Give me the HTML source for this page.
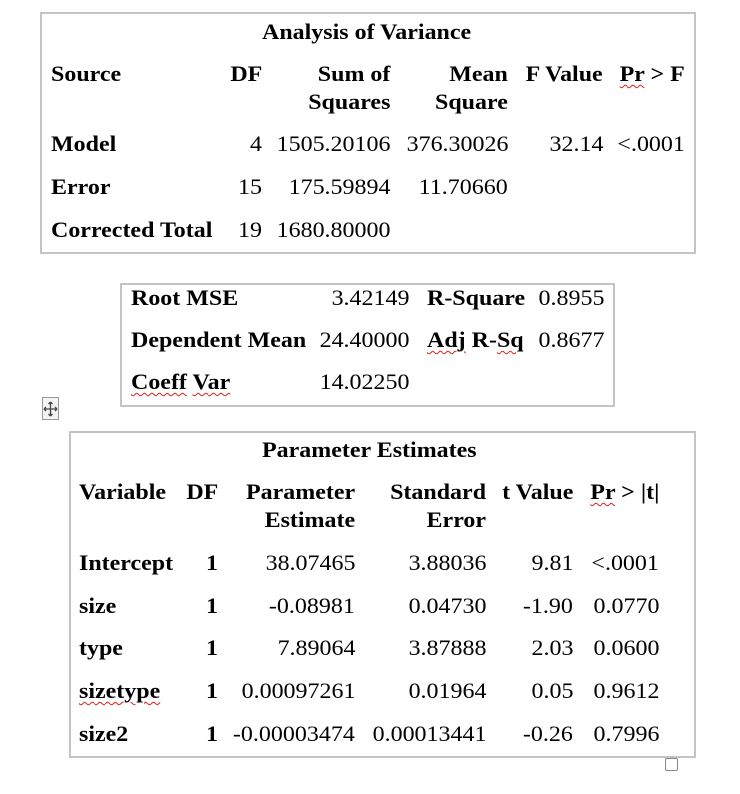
<!DOCTYPE html>
<html><head><meta charset="utf-8"><style>
body{margin:0;width:740px;height:794px;background:#fff;position:relative;font-family:"Liberation Serif","Times New Roman",serif;font-size:22px;color:#000;overflow:hidden}
.box{position:absolute;border:2px solid #c4c4c4;box-sizing:border-box}
.t{position:absolute;line-height:26px;white-space:nowrap;transform:scaleX(1.09);transform-origin:left center}
.t[style*="right:"]{transform-origin:right center}
.b{font-weight:bold}
.r{text-align:right}
.sq{text-decoration:underline wavy #e02020;text-decoration-thickness:1px;text-underline-offset:3px}
</style></head><body>
<div class="box" style="left:40px;top:12px;width:656px;height:242px"></div>
<div class="t b" style="left:262px;top:19px">Analysis of Variance</div>
<div class="t b" style="left:51px;top:61px">Source</div>
<div class="t b" style="right:478px;top:61px">DF</div>
<div class="t b r" style="right:350px;top:61px">Sum of<br><span style="line-height:30px">Squares</span></div>
<div class="t b r" style="right:232px;top:61px">Mean<br><span style="line-height:30px">Square</span></div>
<div class="t b" style="right:137px;top:61px">F Value</div>
<div class="t b" style="right:55px;top:61px"><span class="sq">Pr</span> &gt; F</div>
<div class="t b" style="left:51px;top:131px">Model</div>
<div class="t b" style="left:51px;top:174px">Error</div>
<div class="t b" style="left:51px;top:217px">Corrected Total</div>
<div class="t" style="right:478px;top:131px">4</div>
<div class="t" style="right:478px;top:174px">15</div>
<div class="t" style="right:478px;top:217px">19</div>
<div class="t" style="right:350px;top:131px">1505.20106</div>
<div class="t" style="right:350px;top:174px">175.59894</div>
<div class="t" style="right:350px;top:217px">1680.80000</div>
<div class="t" style="right:232px;top:131px">376.30026</div>
<div class="t" style="right:232px;top:174px">11.70660</div>
<div class="t" style="right:137px;top:131px">32.14</div>
<div class="t" style="right:55px;top:131px">&lt;.0001</div>

<div class="box" style="left:120px;top:283px;width:495px;height:124px"></div>
<div class="t b" style="left:131px;top:285px">Root MSE</div>
<div class="t b" style="left:131px;top:327px">Dependent Mean</div>
<div class="t b" style="left:131px;top:369px"><span class="sq">Coeff</span> <span class="sq">Var</span></div>
<div class="t" style="right:331px;top:285px">3.42149</div>
<div class="t" style="right:331px;top:327px">24.40000</div>
<div class="t" style="right:331px;top:369px">14.02250</div>
<div class="t b" style="left:427px;top:285px">R-Square</div>
<div class="t b" style="left:427px;top:327px"><span class="sq">Adj</span> R-<span class="sq">Sq</span></div>
<div class="t" style="right:136px;top:285px">0.8955</div>
<div class="t" style="right:136px;top:327px">0.8677</div>

<div style="position:absolute;left:42px;top:397px;width:17px;height:23px;border:1px solid #999;background:#f4f4f4;box-sizing:border-box"></div>
<svg style="position:absolute;left:42px;top:400px" width="17" height="18" viewBox="0 0 17 18"><path d="M8.5 2V16M2 9H15M8.5 2l-2 2M8.5 2l2 2M8.5 16l-2-2M8.5 16l2-2M2 9l2-2M2 9l2 2M15 9l-2-2M15 9l-2 2" stroke="#444" stroke-width="1.3" fill="none"/></svg>

<div class="box" style="left:69px;top:431px;width:627px;height:327px"></div>
<div class="t b" style="left:262px;top:437px">Parameter Estimates</div>
<div class="t b" style="left:79px;top:479px">Variable</div>
<div class="t b" style="right:522px;top:479px">DF</div>
<div class="t b r" style="right:385px;top:479px">Parameter<br><span style="line-height:30px">Estimate</span></div>
<div class="t b r" style="right:254px;top:479px">Standard<br><span style="line-height:30px">Error</span></div>
<div class="t b" style="right:167px;top:479px">t Value</div>
<div class="t b" style="right:81px;top:479px"><span class="sq">Pr</span> &gt; |t|</div>
<div class="t b" style="left:79px;top:550px">Intercept</div>
<div class="t b" style="left:79px;top:593px">size</div>
<div class="t b" style="left:79px;top:635px">type</div>
<div class="t b" style="left:79px;top:678px"><span class="sq">sizetype</span></div>
<div class="t b" style="left:79px;top:721px">size2</div>
<div class="t b" style="right:522px;top:550px">1</div>
<div class="t b" style="right:522px;top:593px">1</div>
<div class="t b" style="right:522px;top:635px">1</div>
<div class="t b" style="right:522px;top:678px">1</div>
<div class="t b" style="right:522px;top:721px">1</div>
<div class="t" style="right:385px;top:550px">38.07465</div>
<div class="t" style="right:385px;top:593px">-0.08981</div>
<div class="t" style="right:385px;top:635px">7.89064</div>
<div class="t" style="right:385px;top:678px">0.00097261</div>
<div class="t" style="right:385px;top:721px">-0.00003474</div>
<div class="t" style="right:254px;top:550px">3.88036</div>
<div class="t" style="right:254px;top:593px">0.04730</div>
<div class="t" style="right:254px;top:635px">3.87888</div>
<div class="t" style="right:254px;top:678px">0.01964</div>
<div class="t" style="right:254px;top:721px">0.00013441</div>
<div class="t" style="right:167px;top:550px">9.81</div>
<div class="t" style="right:167px;top:593px">-1.90</div>
<div class="t" style="right:167px;top:635px">2.03</div>
<div class="t" style="right:167px;top:678px">0.05</div>
<div class="t" style="right:167px;top:721px">-0.26</div>
<div class="t" style="right:81px;top:550px">&lt;.0001</div>
<div class="t" style="right:81px;top:593px">0.0770</div>
<div class="t" style="right:81px;top:635px">0.0600</div>
<div class="t" style="right:81px;top:678px">0.9612</div>
<div class="t" style="right:81px;top:721px">0.7996</div>
<div style="position:absolute;left:665px;top:758px;width:11px;height:11px;border:1px solid #888;border-radius:2px;background:#fff"></div>
</body></html>
